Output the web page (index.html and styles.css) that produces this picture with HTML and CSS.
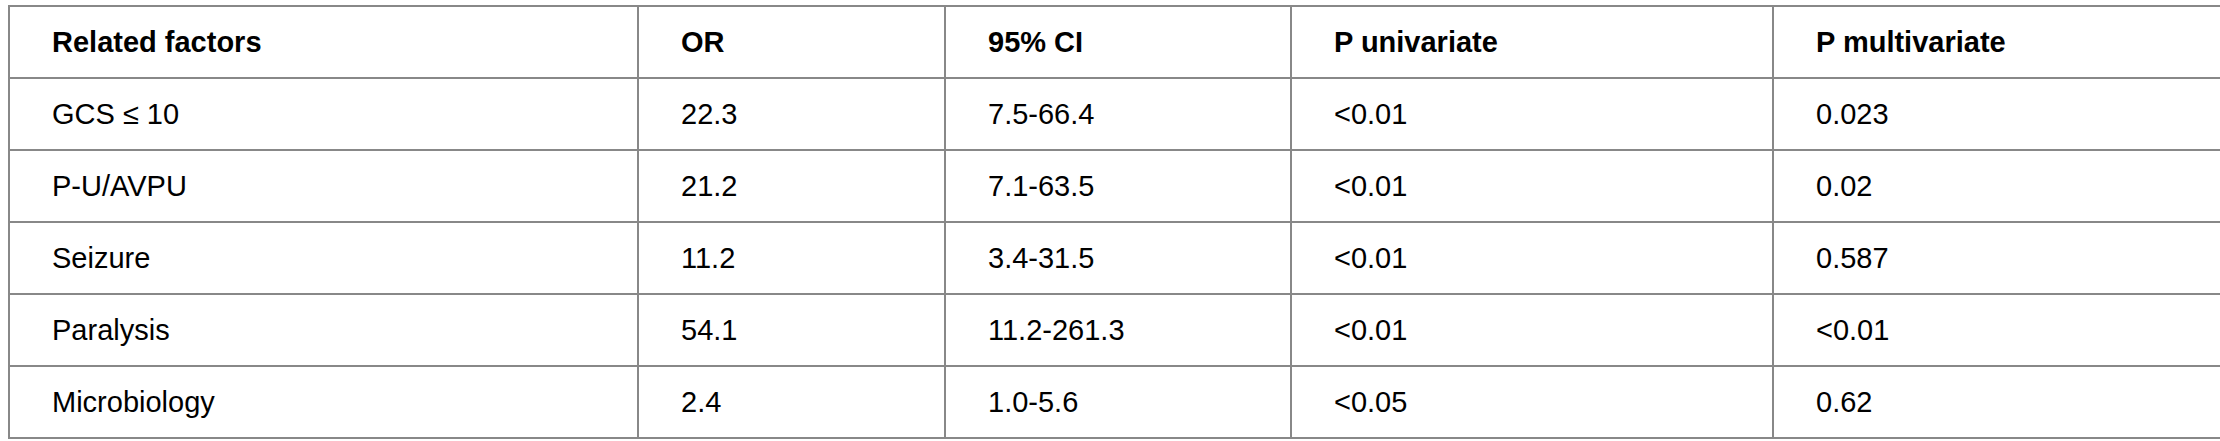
FILE: index.html
```html
<!DOCTYPE html>
<html>
<head>
<meta charset="utf-8">
<link rel="stylesheet" href="styles.css">
</head>
<body>
<table class="tbl">
  <colgroup>
    <col class="c1"><col class="c2"><col class="c3"><col class="c4"><col class="c5">
  </colgroup>
  <thead>
    <tr><th>Related factors</th><th>OR</th><th>95% CI</th><th>P univariate</th><th>P multivariate</th></tr>
  </thead>
  <tbody>
    <tr><td>GCS ≤ 10</td><td>22.3</td><td>7.5-66.4</td><td>&lt;0.01</td><td>0.023</td></tr>
    <tr><td>P-U/AVPU</td><td>21.2</td><td>7.1-63.5</td><td>&lt;0.01</td><td>0.02</td></tr>
    <tr><td>Seizure</td><td>11.2</td><td>3.4-31.5</td><td>&lt;0.01</td><td>0.587</td></tr>
    <tr><td>Paralysis</td><td>54.1</td><td>11.2-261.3</td><td>&lt;0.01</td><td>&lt;0.01</td></tr>
    <tr><td>Microbiology</td><td>2.4</td><td>1.0-5.6</td><td>&lt;0.05</td><td>0.62</td></tr>
  </tbody>
</table>
</body>
</html>
```

FILE: styles.css
```css
html, body { margin: 0; padding: 0; background: #fff; }
body { padding: 5px 0 0 8px; font-family: "Liberation Sans", Arial, sans-serif; color: #000; }
.tbl { border-collapse: collapse; width: 2230px; table-layout: fixed; }
.c1 { width: 629px; } .c2 { width: 307px; } .c3 { width: 346px; } .c4 { width: 482px; } .c5 { width: 466px; }
.tbl th, .tbl td { border: 2px solid #888; text-align: left; padding: 0 0 0 42px; height: 70px; font-size: 29px; }
.tbl th { font-weight: bold; height: 70px; }
```
